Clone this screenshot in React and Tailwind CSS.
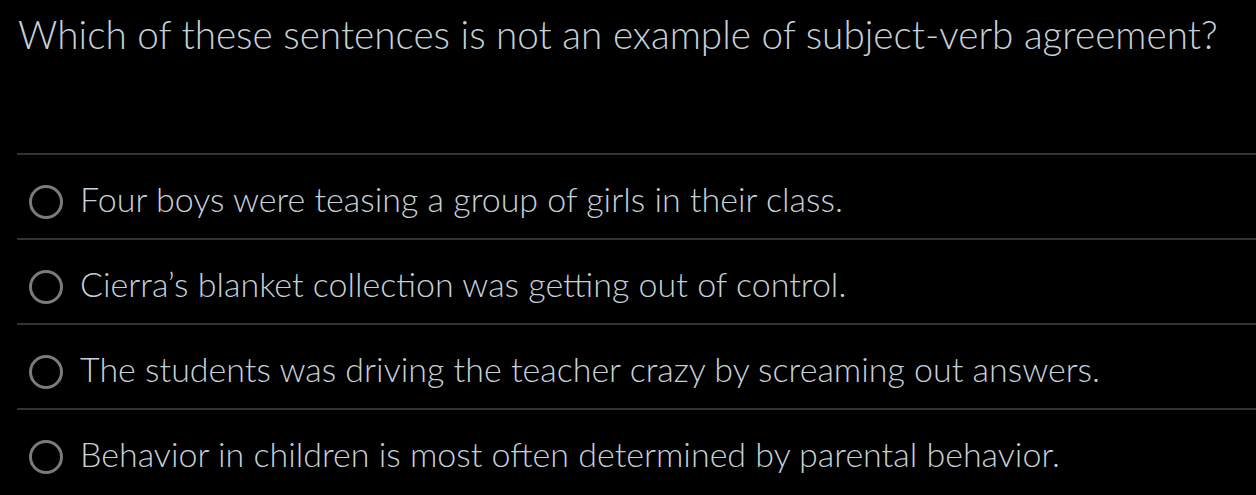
export default function App() {
  const options = [
    "Four boys were teasing a group of girls in their class.",
    "Cierra\u2019s blanket collection was getting out of control.",
    "The students was driving the teacher crazy by screaming out answers.",
    "Behavior in children is most often determined by parental behavior.",
  ];
  return (
    <div
      className="w-[1256px] h-[495px] bg-black overflow-hidden text-[#c6d0d9] font-light"
      style={{ fontFamily: "'Lato Light', Lato, 'Noto Sans', sans-serif" }}
    >
      <div className="h-[153px] pl-[18px] pt-[8px]">
        <h1 className="text-[38.7px] leading-[52px] font-light">
          Which of these sentences is not an example of subject-verb agreement?
        </h1>
      </div>
      <div className="ml-[17px]">
        {options.map((o) => (
          <div
            key={o}
            className="h-[85px] border-t-2 border-[#333333] flex items-center pl-[12px] gap-[17px]"
          >
            <span className="w-[34px] h-[34px] rounded-full border-[3px] border-[#7b7b7b] shrink-0 mt-[10px]" />
            <span className="text-[34px] leading-[44px] font-light mt-[4px]">{o}</span>
          </div>
        ))}
      </div>
    </div>
  );
}
